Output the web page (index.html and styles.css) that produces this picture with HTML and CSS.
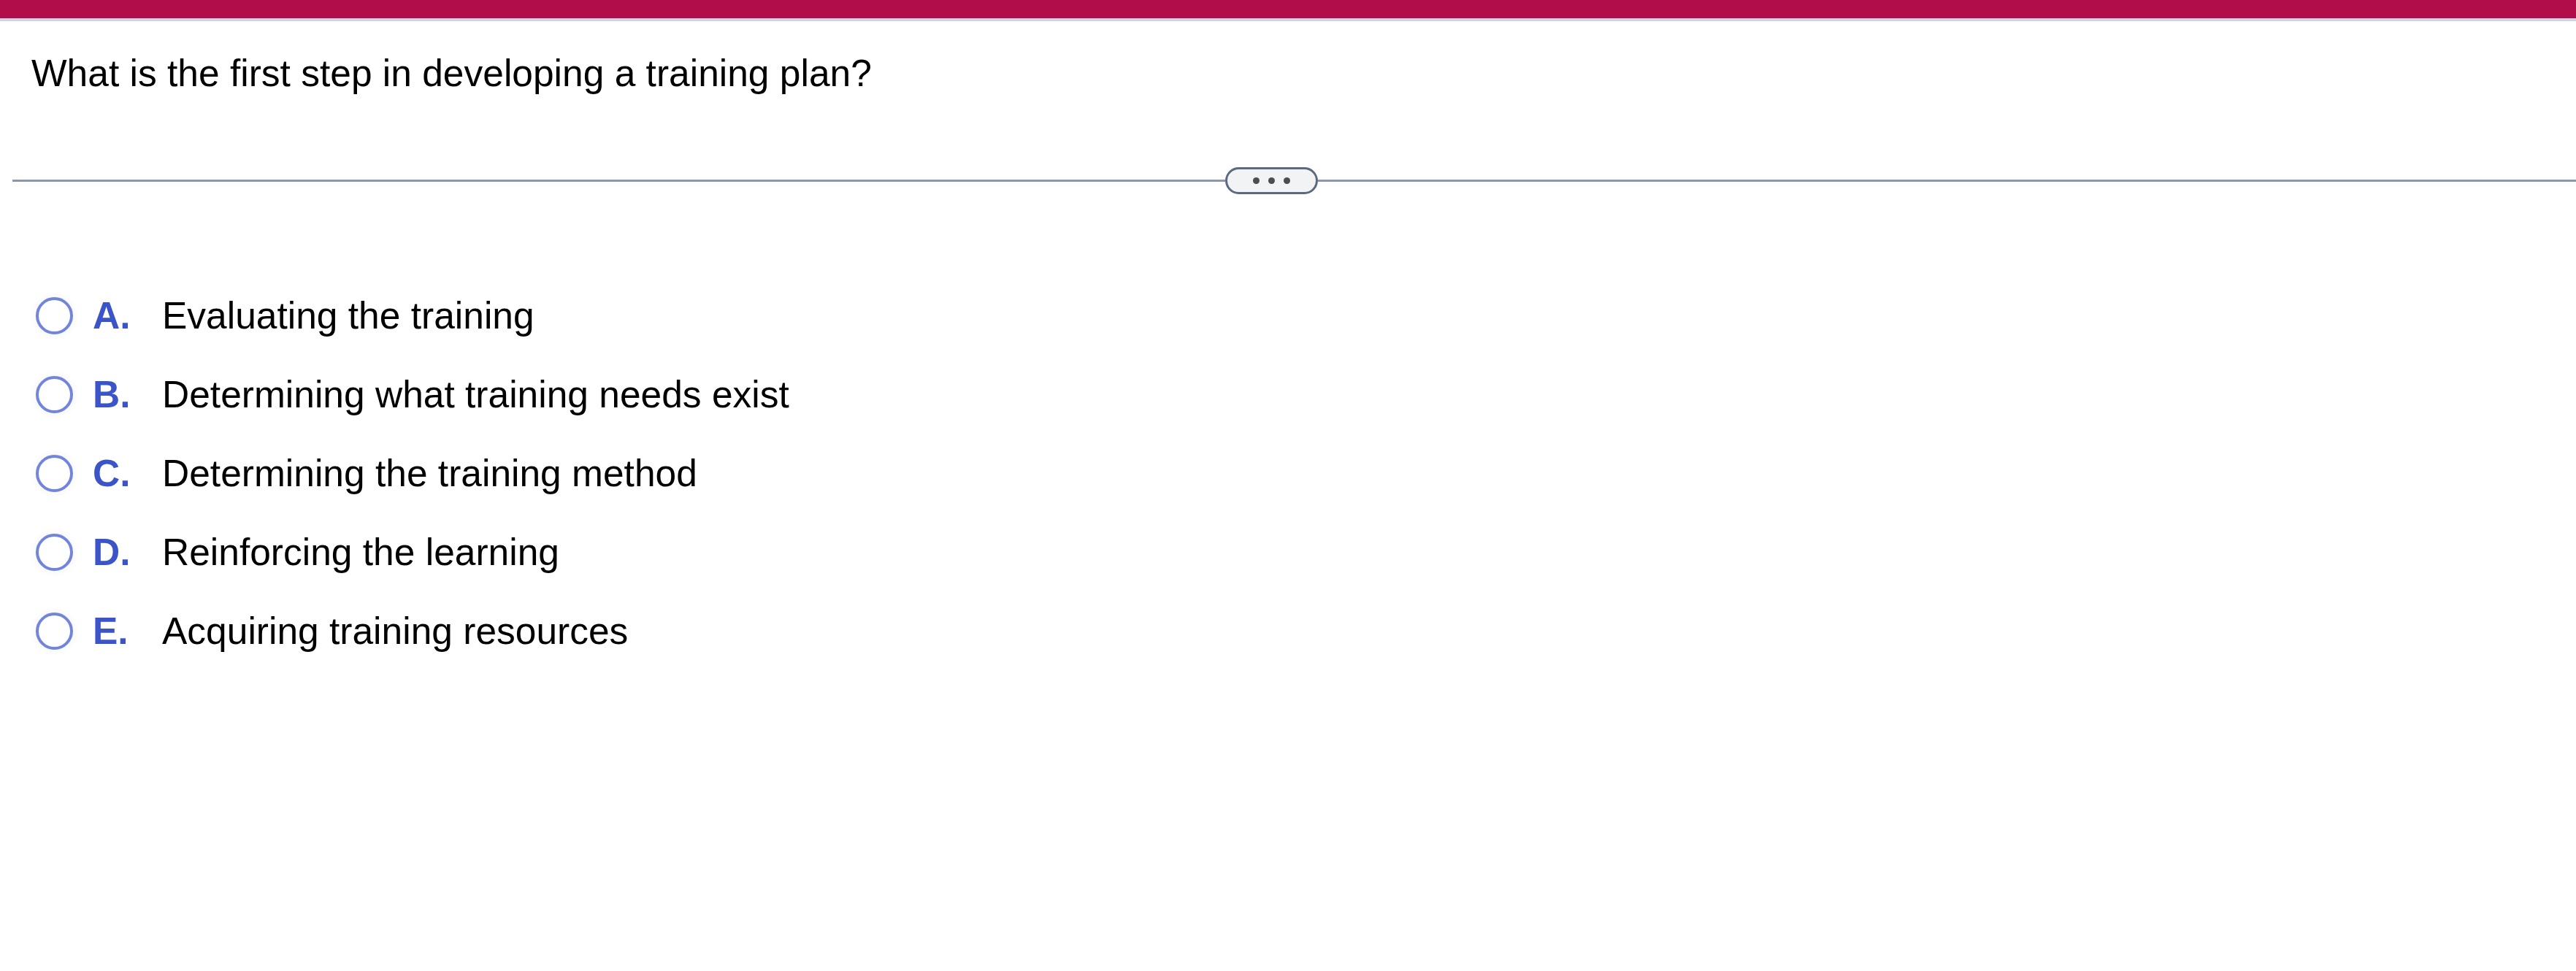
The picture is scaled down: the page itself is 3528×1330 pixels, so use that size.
FILE: index.html
```html
<!DOCTYPE html>
<html>

	<head>
		<meta charset="UTF-8">
		<title>Question</title>
		<link rel="stylesheet" href="styles.css">
	</head>

	<body>
		<div class="topbar"></div>
		<p class="question">What is the first step in developing a training plan?</p>
		<div class="divider">
			<span class="line line-left"></span>
			<span class="more"><i></i><i></i><i></i></span>
			<span class="line line-right"></span>
		</div>
		<ul class="options">
			<li><span class="radio"></span><b>A.</b><span>Evaluating the training</span></li>
			<li><span class="radio"></span><b>B.</b><span>Determining what training needs exist</span></li>
			<li><span class="radio"></span><b>C.</b><span>Determining the training method</span></li>
			<li><span class="radio"></span><b>D.</b><span>Reinforcing the learning</span></li>
			<li><span class="radio"></span><b>E.</b><span>Acquiring training resources</span></li>
		</ul>
	</body>

</html>
```

FILE: styles.css
```css
* {
	margin: 0;
	padding: 0;
	list-style: none;
}

body {
	background: #fff;
	color: #000;
	font-family: "Liberation Sans", Arial, Helvetica, sans-serif;
	font-size: 51.5px;
	line-height: 60px;
}

.topbar {
	height: 25px;
	background: #b20d4b;
	border-bottom: 4px solid #cdd4e3;
}

.question {
	margin-top: 41px;
	padding-left: 43px;
}

.divider {
	display: flex;
	align-items: center;
	margin-top: 99px;
	padding-left: 17px;
	height: 37px;
}

.line {
	height: 3px;
	background: #8e97a9;
}

.line-left {
	width: 1661px;
}

.line-right {
	flex: 1;
}

.more {
	display: flex;
	align-items: center;
	justify-content: center;
	gap: 12px;
	width: 121px;
	height: 31px;
	border: 3px solid #5b6a7e;
	border-radius: 20px;
	background: #f2f3f5;
}

.more i {
	width: 9px;
	height: 9px;
	border-radius: 50%;
	background: #4d4d4d;
}

.options {
	margin-top: 136px;
	padding-left: 49px;
}

.options li {
	display: flex;
	align-items: center;
	height: 60px;
	margin-bottom: 48px;
}

.radio {
	width: 43px;
	height: 43px;
	border: 4px solid #7285da;
	border-radius: 50%;
	box-shadow: 0 0 6px 5px rgba(0, 0, 0, 0.025);
}

.options b {
	width: 95px;
	margin-left: 27px;
	color: #3b55c8;
}
```
